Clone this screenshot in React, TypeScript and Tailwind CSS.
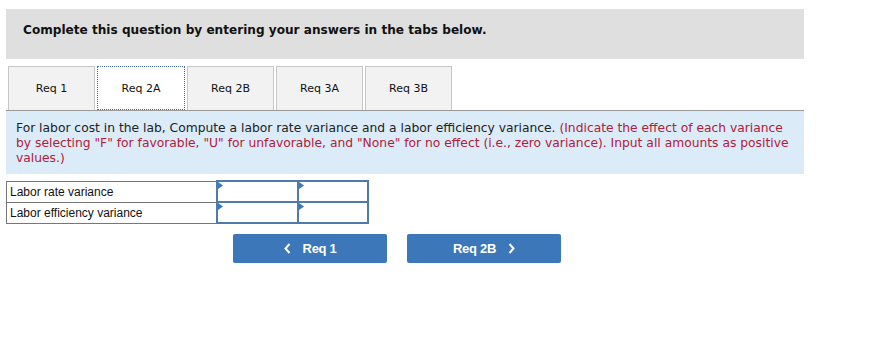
import React, { useState } from "react";

const tabs = ["Req 1", "Req 2A", "Req 2B", "Req 3A", "Req 3B"];
const rows = ["Labor rate variance", "Labor efficiency variance"];

const Marker = () => (
  <svg width="5" height="7" viewBox="0 0 5 7" className="absolute left-0 top-0">
    <path d="M0 0 L5 3.5 L0 7 Z" fill="#3b78c2" />
  </svg>
);

const InputCell = ({ w }: { w: string }) => (
  <td className={`relative h-[21px] ${w} border-2 border-[#4f7bab] p-0`}>
    <Marker />
  </td>
);

const App = () => {
  const [active, setActive] = useState<number>(1);

  return (
    <div className="w-[881px] h-[339px] bg-white pl-[6px] pt-[9px]" style={{ fontFamily: '"DejaVu Sans", Verdana, sans-serif' }}>
      {/* header */}
      <div className="w-[798px] h-[50px] bg-[#dfdfdf] pl-[17px] pt-[12px] text-[12.1px] font-bold text-[#111]">
        Complete this question by entering your answers in the tabs below.
      </div>

      {/* tabs */}
      <div className="w-[798px] mt-[7px] flex gap-[2px] pl-[2px] border-b border-[#999]">
        {tabs.map((t, i) => (
          <button
            key={t}
            onClick={() => setActive(i)}
            className={
              i === active
                ? "w-[88px] h-[44px] pt-[2px] bg-white border border-dotted border-[#4a6fa5] text-[11px] text-[#111]"
                : "w-[87px] h-[44px] pt-[2px] bg-[#f2f2f2] border border-b-0 border-[#c6c6c6] text-[11px] text-[#111]"
            }
          >
            {t}
          </button>
        ))}
      </div>

      {/* instructions */}
      <div className="w-[798px] h-[63px] bg-[#dbebf8] px-[10px] pt-[10px] text-[12.3px] leading-[15px] text-[#222]">
        <p>
          For labor cost in the lab, Compute a labor rate variance and a labor efficiency variance.{" "}
          <span className="text-[#b0203a]">
            (Indicate the effect of each variance by selecting "F" for favorable, "U" for unfavorable, and "None" for no effect (i.e., zero variance). Input all amounts as positive values.)
          </span>
        </p>
      </div>

      {/* table */}
      <table className="mt-[6px] border-collapse text-[12px] text-[#111]" style={{ fontFamily: '"Liberation Sans", Arial, sans-serif' }}>
        <tbody>
          {rows.map((r) => (
            <tr key={r}>
              <td className="w-[210px] h-[21px] border border-[#777] pl-[3px] py-0 leading-[18px]">{r}</td>
              <InputCell w="w-[81px]" />
              <InputCell w="w-[70px]" />
            </tr>
          ))}
        </tbody>
      </table>

      {/* nav buttons */}
      <div className="mt-[10px] ml-[227px] flex gap-[20px]" style={{ fontFamily: '"Liberation Sans", Arial, sans-serif' }}>
        <button className="w-[154px] h-[29px] rounded-[2px] bg-[#3b77b9] text-white text-[13px] font-bold flex items-center justify-center gap-[12px] tracking-[-0.3px]">
          <svg width="7" height="11" viewBox="0 0 7 11">
            <path d="M5.5 1 L1.5 5.5 L5.5 10" stroke="white" strokeWidth="2" fill="none" />
          </svg>
          Req 1
        </button>
        <button className="w-[154px] h-[29px] rounded-[2px] bg-[#3b77b9] text-white text-[13px] font-bold flex items-center justify-center gap-[12px] tracking-[-0.3px]">
          Req 2B
          <svg width="7" height="11" viewBox="0 0 7 11">
            <path d="M1.5 1 L5.5 5.5 L1.5 10" stroke="white" strokeWidth="2" fill="none" />
          </svg>
        </button>
      </div>
    </div>
  );
};

export default App;
